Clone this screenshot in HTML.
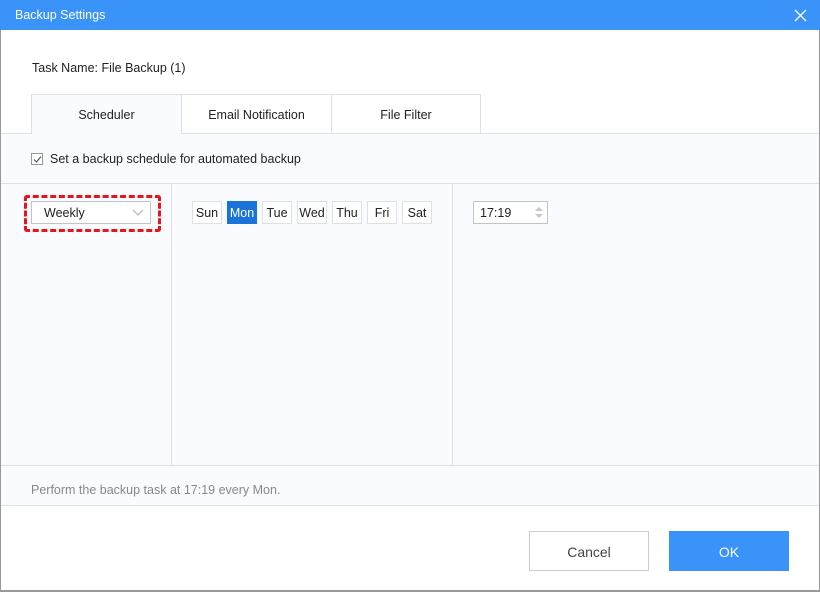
<!DOCTYPE html><html><head><style>
body{margin:0;width:820px;height:592px;position:relative;font-family:"Liberation Sans",sans-serif;font-size:12.5px;color:#222;background:#fff;overflow:hidden}
.a{position:absolute;box-sizing:border-box}
.d{position:absolute;top:201px;width:30px;height:23px;border:1px solid #dde1e7;background:#fff;text-align:center;line-height:22px;box-sizing:border-box}
</style></head><body>
<div class="a" style="left:0;top:0;width:820px;height:30px;background:#3a93f8;color:#fff;padding:8px 0 0 15px">Backup Settings</div>
<svg class="a" style="left:794px;top:9px" width="13" height="13"><path d="M1 1L12 12M12 1L1 12" stroke="#fff" stroke-width="1.3"/></svg>
<div class="a" style="left:0;top:30px;width:1px;height:562px;background:#999"></div>
<div class="a" style="left:819px;top:30px;width:1px;height:562px;background:#999"></div>
<div class="a" style="left:0;top:590px;width:820px;height:2px;background:#999"></div>
<div class="a" style="left:32px;top:61px">Task Name: File Backup (1)</div>
<div class="a" style="left:1px;top:133px;width:818px;height:373px;background:#f9fbfe;border-top:1px solid #dde1e7;border-bottom:1px solid #dde1e7"></div>
<div class="a" style="left:31px;top:94px;width:151px;height:40px;background:#f9fbfe;border:1px solid #dde1e7;border-bottom:none;text-align:center;line-height:40px">Scheduler</div>
<div class="a" style="left:181px;top:94px;width:151px;height:40px;background:#fff;border:1px solid #dde1e7;text-align:center;line-height:40px">Email Notification</div>
<div class="a" style="left:331px;top:94px;width:150px;height:40px;background:#fff;border:1px solid #dde1e7;text-align:center;line-height:40px">File Filter</div>
<div class="a" style="left:31px;top:153px;width:12px;height:12px;border:1px solid #999;background:#fff"></div>
<svg class="a" style="left:33px;top:155px" width="9" height="9"><path d="M1 4.5L3.5 7L8 1.5" stroke="#555" stroke-width="1.2" fill="none"/></svg>
<div class="a" style="left:50px;top:152px">Set a backup schedule for automated backup</div>
<div class="a" style="left:1px;top:183px;width:818px;height:1px;background:#dde1e7"></div>
<div class="a" style="left:1px;top:465px;width:818px;height:1px;background:#dde1e7"></div>
<div class="a" style="left:171px;top:184px;width:1px;height:281px;background:#dde1e7"></div>
<div class="a" style="left:452px;top:184px;width:1px;height:281px;background:#dde1e7"></div>
<div class="a" style="left:24px;top:195px;width:137px;height:37px;border:3px dashed #e8141c;border-radius:3px"></div>
<div class="a" style="left:31px;top:201px;width:120px;height:23px;border:1px solid #bfc4cb;background:#fff;padding:4px 0 0 12px">Weekly</div>
<svg class="a" style="left:132px;top:209px" width="12" height="8"><path d="M1 1L6 6L11 1" stroke="#bbb" stroke-width="1.3" fill="none"/></svg>
<div class="d" style="left:192px">Sun</div>
<div class="d" style="left:227px;background:#1a73d6;border-color:#1a73d6;color:#fff">Mon</div>
<div class="d" style="left:262px">Tue</div>
<div class="d" style="left:297px">Wed</div>
<div class="d" style="left:332px">Thu</div>
<div class="d" style="left:367px">Fri</div>
<div class="d" style="left:402px">Sat</div>
<div class="a" style="left:473px;top:201px;width:75px;height:23px;border:1px solid #bfc4cb;background:#fff;padding:4px 0 0 6px">17:19</div>
<svg class="a" style="left:534px;top:206px" width="10" height="13"><path d="M1 5L5 1L9 5ZM1 8L5 12L9 8Z" fill="#c4c8ce"/></svg>
<div class="a" style="left:31px;top:483px;color:#888">Perform the backup task at 17:19 every Mon.</div>
<div class="a" style="left:529px;top:531px;width:120px;height:40px;border:1px solid #c8cdd4;background:#fff;text-align:center;line-height:40px;font-size:14px;color:#444">Cancel</div>
<div class="a" style="left:669px;top:531px;width:120px;height:40px;background:#3a93f8;text-align:center;line-height:42px;font-size:14px;color:#fff">OK</div>
</body></html>
